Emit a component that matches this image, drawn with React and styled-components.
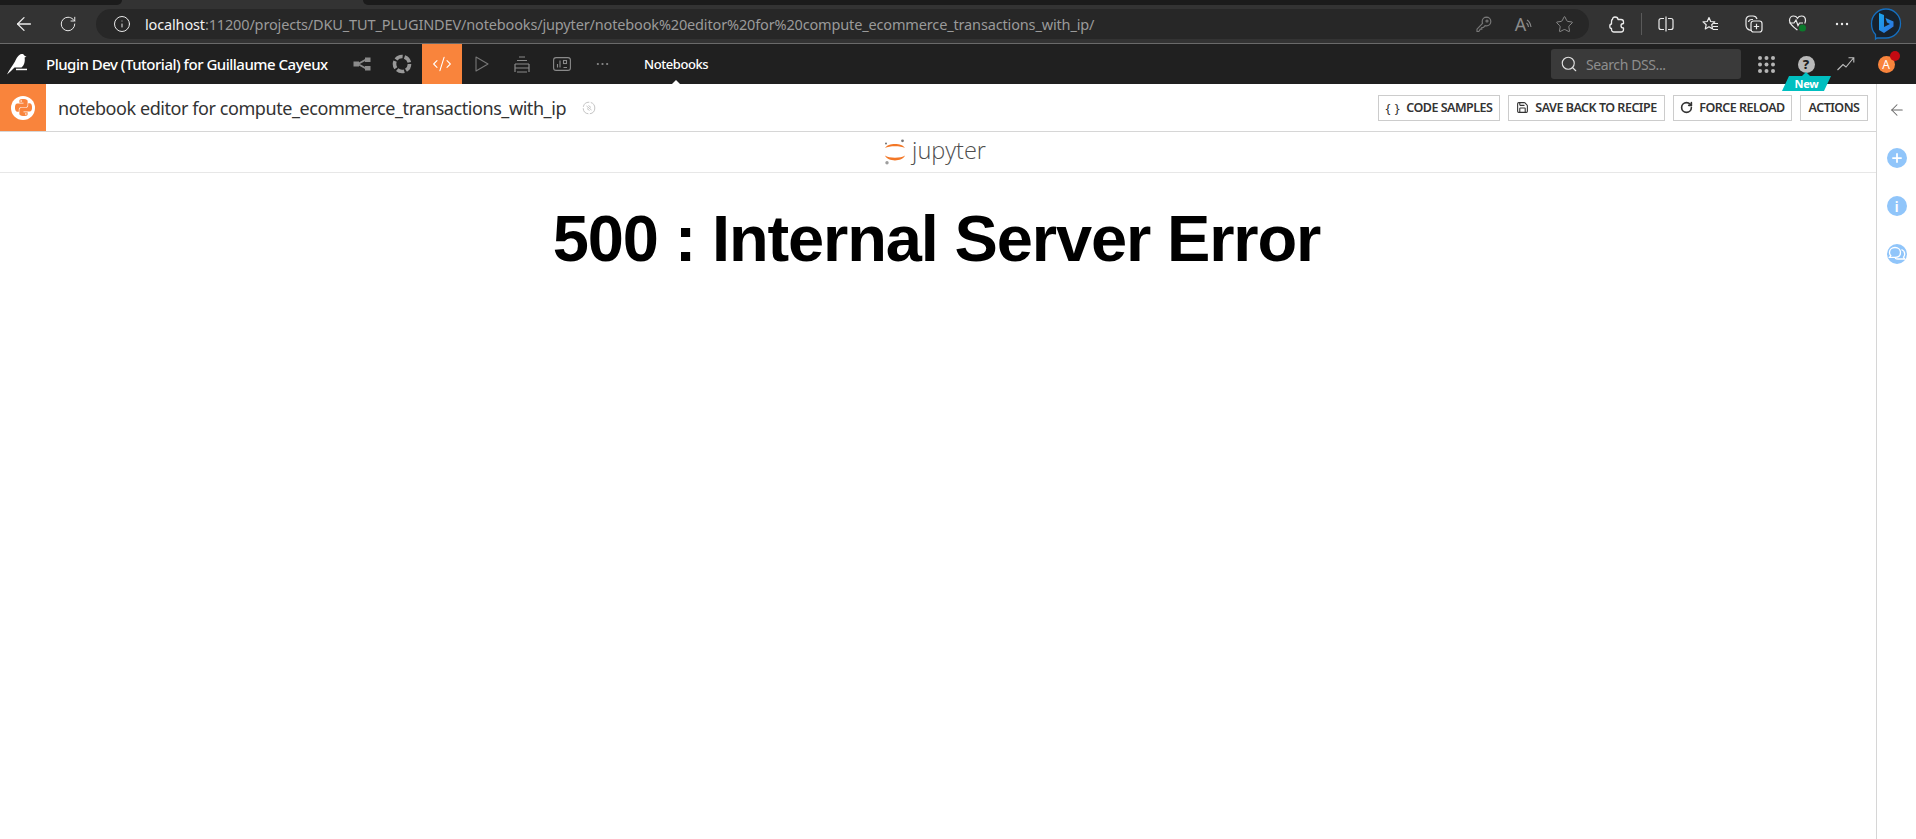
import styled, { createGlobalStyle } from "styled-components";
import { ArrowLeft, RotateCw, Info, Star, CodeXml, Search, Plus, Save } from "lucide-react";
import { SiPython } from "react-icons/si";

const GlobalStyle = createGlobalStyle`
  html, body {
    margin: 0;
    padding: 0;
    background: #fff;
    overflow: hidden;
  }
  * {
    box-sizing: border-box;
  }
`;

const UI_FONT = `"Noto Sans", "Open Sans", sans-serif`;

const Page = styled.div`
  display: flex;
  flex-direction: column;
  height: 839px;
  width: 1916px;
  overflow: hidden;
  font-family: ${UI_FONT};
`;

const TabStrip = styled.div`
  display: flex;
  height: 5px;
  background: #333;
`;

const InactiveTab = styled.div`
  height: 5px;
  flex: ${(p) => (p.$grow ? "1" : "none")};
  width: ${(p) => (p.$grow ? "auto" : "122px")};
  background: #1b1b1b;
  border-radius: ${(p) => (p.$grow ? "0 0 0 6px" : "0 0 6px 0")};
`;

const ActiveTab = styled.div`
  width: 241px;
`;

const BrowserBar = styled.div`
  display: flex;
  align-items: center;
  height: 39px;
  padding-left: 2px;
  background: #333;
  border-bottom: 1px solid #6a6a6a;
`;

const BrowserSlot = styled.div`
  position: relative;
  display: flex;
  align-items: center;
  justify-content: center;
  flex: none;
  width: ${(p) => p.$w || 44}px;
  height: 30px;
  color: ${(p) => p.$color || "#ececec"};
`;

const UrlPill = styled.div`
  display: flex;
  align-items: center;
  width: 1493px;
  height: 30px;
  margin: 0 6px;
  padding: 0 5px 0 12px;
  border-radius: 15px;
  background: #272727;
`;

const UrlText = styled.div`
  flex: 1;
  margin-left: 9px;
  font-size: 14.5px;
  letter-spacing: -0.15px;
  color: #9a9a9a;
  white-space: nowrap;
`;

const UrlHost = styled.span`
  color: #f2f2f2;
`;

const BarDivider = styled.div`
  flex: none;
  width: 1px;
  height: 22px;
  margin: 0 2px;
  background: #5a5a5a;
`;

const ReadLetter = styled.span`
  font-size: 18px;
  line-height: 1;
  color: #8b8b8b;
`;

const NavBar = styled.div`
  display: flex;
  align-items: center;
  height: 40px;
  padding-right: 10px;
  background: #202020;
`;

const BirdSlot = styled.div`
  display: flex;
  align-items: center;
  justify-content: center;
  flex: none;
  width: 33px;
  margin-right: 13px;
`;

const ProjectTitle = styled.div`
  flex: none;
  width: 282px;
  margin-right: 14px;
  font-size: 15px;
  font-weight: 500;
  letter-spacing: -0.5px;
  color: #fff;
  white-space: nowrap;
`;

const NavIcon = styled.div`
  display: flex;
  align-items: center;
  justify-content: center;
  flex: none;
  width: 40px;
  height: 40px;
  color: ${(p) => (p.$active ? "#fff" : "#8a8a8a")};
  background: ${(p) => (p.$active ? "#f9843c" : "transparent")};
`;

const NavLink = styled.div`
  position: relative;
  margin-left: 22px;
  height: 40px;
  line-height: 40px;
  font-size: 13px;
  font-weight: 500;
  letter-spacing: -0.42px;
  color: #fff;

  &::after {
    content: "";
    position: absolute;
    left: 50%;
    bottom: 0;
    margin-left: -4px;
    border: 4px solid transparent;
    border-top: 0;
    border-bottom-color: #fff;
  }
`;

const NavRight = styled.div`
  display: flex;
  align-items: center;
  margin-left: auto;
`;

const SearchBox = styled.div`
  display: flex;
  align-items: center;
  width: 190px;
  height: 30px;
  margin-right: 5px;
  padding-left: 9px;
  gap: 8px;
  border-radius: 3px;
  background: #3a3a3a;
  color: #e0e0e0;
`;

const SearchHint = styled.span`
  font-size: 14px;
  letter-spacing: -0.4px;
  color: #8e8e8e;
`;

const TopSlot = styled.div`
  position: relative;
  display: flex;
  align-items: center;
  justify-content: center;
  flex: none;
  width: 40px;
  height: 40px;
  color: #c4c4c4;
`;

const HelpDot = styled.div`
  width: 17px;
  height: 17px;
  border-radius: 50%;
  background: #b9b9b9;
  color: #202020;
  font-size: 13px;
  font-weight: 800;
  line-height: 17px;
  text-align: center;
`;

const NewBadge = styled.div`
  position: absolute;
  z-index: 2;
  left: -4px;
  top: 32px;
  width: 49px;
  height: 15px;
  background: #00bfc0;
  clip-path: polygon(7px 0, 100% 0, calc(100% - 7px) 100%, 0 100%);
  color: #fff;
  font-size: 11px;
  font-weight: 700;
  letter-spacing: -0.2px;
  line-height: 15px;
  text-align: center;
`;

const BadgeTip = styled.div`
  position: absolute;
  z-index: 2;
  left: 16px;
  top: 28px;
  border: 4px solid transparent;
  border-top: 0;
  border-bottom-color: #00bfc0;
`;

const Avatar = styled.div`
  width: 17px;
  height: 17px;
  border-radius: 50%;
  background: #f9843c;
  color: #fff;
  font-size: 12px;
  line-height: 17px;
  text-align: center;
`;

const RedDot = styled.div`
  position: absolute;
  left: 24px;
  top: 7px;
  width: 10px;
  height: 10px;
  border-radius: 50%;
  background: #c40a12;
`;

const Body = styled.div`
  display: flex;
  flex: 1;
  min-height: 0;
`;

const Main = styled.div`
  flex: 1;
  min-width: 0;
`;

const EditorHeader = styled.div`
  display: flex;
  align-items: center;
  height: 48px;
  padding-right: 8px;
  border-bottom: 1px solid #d6d6d6;
`;

const LangBlock = styled.div`
  display: flex;
  align-items: center;
  justify-content: center;
  flex: none;
  width: 46px;
  height: 47px;
  background: #f9843c;
`;

const LangCircle = styled.div`
  display: flex;
  align-items: center;
  justify-content: center;
  width: 24px;
  height: 24px;
  border-radius: 50%;
  background: #fff;
  color: #f9843c;
`;

const NotebookTitle = styled.div`
  margin-left: 12px;
  font-size: 18px;
  letter-spacing: -0.43px;
  color: #333;
  white-space: nowrap;
`;

const SyncMark = styled.div`
  display: flex;
  margin-left: 16px;
  color: #c4c4c4;
`;

const ButtonRow = styled.div`
  display: flex;
  gap: 8px;
  margin-left: auto;
`;

const ActionButton = styled.div`
  display: flex;
  align-items: center;
  justify-content: center;
  gap: 6px;
  width: ${(p) => p.$w}px;
  height: 26px;
  border: 1px solid #ccc;
  background: #fff;
  color: #333;
  font-size: 12.5px;
  font-weight: 600;
  letter-spacing: -0.5px;
  white-space: nowrap;
`;

const Braces = styled.span`
  font-size: 13px;
  font-weight: 400;
  letter-spacing: 0.5px;
`;

const JupyterBar = styled.div`
  display: flex;
  align-items: center;
  justify-content: center;
  gap: 6px;
  height: 41px;
  padding-right: 6px;
  border-bottom: 1px solid #e7e7e7;
`;

const JupyterName = styled.span`
  font-family: "Open Sans", sans-serif;
  font-size: 23.5px;
  font-weight: 300;
  line-height: 1;
  color: #4e4e4e;
  margin-top: -3px;
`;

const ErrorTitle = styled.h1`
  margin: 31px 0 0;
  padding-right: 3px;
  font-family: "Liberation Sans", Arial, sans-serif;
  font-size: 65px;
  font-weight: 700;
  letter-spacing: -1.15px;
  line-height: 70px;
  text-align: center;
  color: #000;
`;

const SideRail = styled.div`
  display: flex;
  flex-direction: column;
  align-items: center;
  flex: none;
  width: 40px;
  padding-top: 16px;
  border-left: 1px solid #d6d6d6;
`;

const RailBack = styled.div`
  display: flex;
  align-items: center;
  height: 20px;
  margin-bottom: 28px;
  color: #666;
`;

const RailCircle = styled.div`
  display: flex;
  align-items: center;
  justify-content: center;
  width: 20px;
  height: 20px;
  margin-bottom: 28px;
  border-radius: 50%;
  background: #90c5fa;
  color: #fff;
  font-size: 15px;
  font-weight: 600;
`;

function BirdLogo() {
  return (
    <svg width="22" height="22" viewBox="0 0 22 22" fill="#fff">
      <path d="M1 21.500 C3 17.500 6.500 12.500 9 8.500 C10.500 5 12.500 1.500 15.500 1 C17 .8 18 1.500 18.500 2.700 L20.500 3.800 L18.600 4.500 C19.200 8 18.500 12 15.500 14.500 L8.500 14.500 C6 17 3.500 19.500 1 21.500 Z" />
      <rect x="10" y="15.700" width="11" height="1.500" />
    </svg>
  );
}

function FlowIcon() {
  return (
    <svg width="18" height="14" viewBox="0 0 18 14" fill="currentColor">
      <path d="M5 7 L13 2.500 M5 7 L13 11.500" stroke="currentColor" strokeWidth="2" fill="none" />
      <rect x="0.500" y="4.500" width="5.500" height="5" />
      <rect x="12" y="0.500" width="5.500" height="4.500" />
      <rect x="12" y="9" width="5.500" height="4.500" />
    </svg>
  );
}

function RingIcon() {
  return (
    <svg width="20" height="20" viewBox="0 0 20 20">
      <circle
        cx="10"
        cy="10"
        r="7.500"
        fill="none"
        stroke="#999"
        strokeWidth="3.600"
        strokeDasharray="7.500 1.920"
      />
    </svg>
  );
}

function PlayIcon() {
  return (
    <svg width="14" height="16" viewBox="0 0 14 16" fill="none" stroke="#777" strokeWidth="1.100">
      <path d="M1 1 L13 8 L1 15 Z" strokeLinejoin="round" />
    </svg>
  );
}

function JobsIcon() {
  return (
    <svg width="16" height="17" viewBox="0 0 16 17" fill="none" stroke="currentColor" strokeWidth="1.200">
      <path d="M5 1 H11 M3 4.500 H13 M1 8 H15 M1 8 V16 M15 8 V16 M1 12 H15 M3 16 H13" />
    </svg>
  );
}

function DashIcon() {
  return (
    <svg width="18" height="14" viewBox="0 0 18 14" fill="none" stroke="currentColor" strokeWidth="1.100">
      <rect x="0.600" y="0.600" width="16.800" height="12.800" rx="2.500" />
      <path d="M4.500 10.500 V7 M7 10.500 V3.500 M10.500 10.500 H14" />
      <rect x="10.500" y="3.500" width="3" height="3" />
    </svg>
  );
}

function DotsIcon({ size = 14, color = "currentColor" }) {
  return (
    <svg width={size} height="4" viewBox="0 0 14 4" fill={color}>
      <circle cx="2" cy="2" r="1.200" />
      <circle cx="7" cy="2" r="1.200" />
      <circle cx="12" cy="2" r="1.200" />
    </svg>
  );
}

function KeyIcon() {
  return (
    <svg width="16" height="17" viewBox="0 0 16 17" fill="none" stroke="#777" strokeWidth="1.200">
      <path d="M10.500 1.200 a4.300 4.300 0 0 1 0 8.600 c-.6 0 -1 -.1 -1.400 -.2 L7.500 11.500 H5.800 V13.200 H4.300 L2.800 15.500 H1 V13.200 L6.500 7.300 C6.300 6.800 6.200 6.200 6.200 5.500 A4.300 4.300 0 0 1 10.500 1.200 Z" />
      <circle cx="11" cy="5" r="1" />
    </svg>
  );
}

function ReadWaves() {
  return (
    <svg width="7" height="10" viewBox="0 0 7 10" fill="none" stroke="#8b8b8b" strokeWidth="1.100">
      <path d="M1 1 C3.500 2.500 4.500 4.500 5 8 M0.500 4 C1.800 5 2.300 6 2.500 8" />
    </svg>
  );
}

// edge's extensions icon, a rounder blob than the lucide puzzle
function PuzzleBlob() {
  return (
    <svg width="16" height="17" viewBox="0 0 16 17" fill="none" stroke="#ececec" strokeWidth="1.300" strokeLinejoin="round">
      <path d="M6 1 C8 1 9 2.200 9 3.500 H12 C13.500 3.500 14.500 4.500 14.500 6 V7.500 C13 7.500 12 8.500 12 9.700 C12 11 13 12 14.500 12 V13.500 C14.500 15 13.500 16 12 16 H5 C3.500 16 2.500 15 2.500 13.500 V12.500 C1.500 12.500 .8 11.500 .8 10.200 C.8 9 1.500 8 2.500 8 V6 C2.500 4.500 2.500 3.500 3.500 3.500 C3.500 2.200 4.300 1 6 1 Z" />
    </svg>
  );
}

function SplitIcon() {
  return (
    <svg width="16" height="16" viewBox="0 0 16 16" fill="none" stroke="#ececec" strokeWidth="1.200">
      <path d="M6 2.500 H3 a2 2 0 0 0 -2 2 V11.500 a2 2 0 0 0 2 2 H6 M10 2.500 H13 a2 2 0 0 1 2 2 V11.500 a2 2 0 0 1 -2 2 H10 M8 0.500 V15.500" />
    </svg>
  );
}

function FavoritesIcon() {
  return (
    <svg width="17" height="17" viewBox="0 0 17 17" fill="none" stroke="#ececec" strokeWidth="1.200">
      <path d="M7 1.500 L8.700 5.500 L12.800 5.900 L9.700 8.700 L10.600 12.900 L7 10.700 L3.300 12.900 L4.200 8.700 L1 5.900 L5.200 5.500 Z" strokeLinejoin="round" />
      <path d="M11.500 7.500 H16 M10.700 10.500 H16 M11 13.500 H16" />
    </svg>
  );
}

function CollectionsIcon() {
  return (
    <svg width="18" height="18" viewBox="0 0 18 18" fill="none" stroke="#ececec" strokeWidth="1.200">
      <path d="M6.500 15.500 C3 15 1 13.500 1 10 V5 C1 2.500 3 1 5 1 H8 C10 1 11.500 2 12 4" />
      <path d="M3.500 7 C3.800 5.500 4.800 4.500 6.500 4.500 H8" />
      <rect x="6" y="6" width="11" height="11" rx="2.500" />
      <path d="M11.500 8.800 V14.200 M8.800 11.500 H14.200" />
    </svg>
  );
}

function HeartPulseIcon() {
  return (
    <svg width="20" height="20" viewBox="0 0 20 20" fill="none">
      <path
        d="M9.500 16 C6 13.500 1.500 10.500 1.500 6.500 C1.500 3.500 3.500 2 5.500 2 C7.500 2 8.800 3 9.500 4.200 C10.200 3 11.500 2 13.500 2 C15.800 2 17.500 3.700 17.500 6.500 C17.500 7.500 17.200 8.500 16.700 9.500"
        stroke="#ececec"
        strokeWidth="1.200"
      />
      <path d="M1.500 9 H6 L8 6 L10 11.500 L11.500 9 H15" stroke="#ececec" strokeWidth="1.200" />
      <circle cx="14.500" cy="14" r="3.500" fill="#0b7a2c" />
    </svg>
  );
}

function BingLogo() {
  return (
    <svg width="32" height="34" viewBox="0 0 32 34">
      <defs>
        <linearGradient id="bingB" x1="0" y1="0" x2="1" y2="1">
          <stop offset="0" stopColor="#1aa7ec" />
          <stop offset="1" stopColor="#2e6fe0" />
        </linearGradient>
      </defs>
      <path
        d="M16 2 C24 2 30.500 8.500 30.500 16.500 C30.500 24.500 24 31 16 31 L7.500 31 C7 31 6 31.500 5.500 32 L5.500 27.500 C2.800 24.800 1.500 21 1.500 16.500 C1.500 8.500 8 2 16 2 Z"
        fill="#17222e"
        stroke="#156fc0"
        strokeWidth="1.300"
      />
      <path
        d="M9 6 L14 8 V20 L20 17 L17 15.500 L15.500 11 L23.500 14.500 V19.500 L14 26 L9 23 Z"
        fill="url(#bingB)"
      />
    </svg>
  );
}

function GridDots() {
  const dots = [];
  for (let row = 0; row < 3; row++) {
    for (let col = 0; col < 3; col++) {
      dots.push(<circle key={`${row}-${col}`} cx={2 + col * 6.5} cy={2 + row * 6.5} r="2" />);
    }
  }
  return (
    <svg width="17" height="17" viewBox="0 0 17 17" fill="#b5b5b5">
      {dots}
    </svg>
  );
}

function TrendIcon() {
  return (
    <svg width="18" height="14" viewBox="0 0 18 14" fill="none" stroke="#bdbdbd" strokeWidth="1.100">
      <path d="M0.500 13 L6 7.500 L9 10 L16.500 1 M11.500 0.800 H16.800 V5.500" />
    </svg>
  );
}

function SyncIcon() {
  return (
    <svg width="14" height="14" viewBox="0 0 14 14" fill="none" stroke="currentColor" strokeWidth="1">
      <circle cx="7" cy="7" r="5.800" strokeDasharray="8 1.500" />
      <path d="M4.500 5 L9.500 9 M5 7.500 L7.500 9.500 M6.500 4.500 L9 6.500" />
    </svg>
  );
}

function JupyterLogo() {
  return (
    <svg width="22" height="26" viewBox="0 0 22 26">
      <path d="M1 9 C4 3.500 18 3.500 21 9 C17 6.500 5 6.500 1 9 Z" fill="#f37726" />
      <path d="M1 16.500 C5 19.500 17 19.500 21 16.500 C18 23 4 23 1 16.500 Z" fill="#f37726" />
      <circle cx="18.500" cy="1.800" r="1.400" fill="#767677" />
      <circle cx="2" cy="4.500" r="0.900" fill="#616262" />
      <circle cx="3" cy="23.800" r="1.700" fill="#9e9e9e" />
    </svg>
  );
}

function ChatIcon() {
  return (
    <svg width="18" height="16" viewBox="0 0 18 16" fill="none" stroke="#fff" strokeWidth="1.300">
      <path d="M7 1.500 C10.300 1.500 12.500 3.600 12.500 6.400 C12.500 9.300 10.300 11.300 7 11.300 H1.500 L2.800 9.600 C1.900 8.700 1.500 7.600 1.500 6.400 C1.500 3.600 3.700 1.500 7 1.500 Z" />
      <path d="M13.500 3.500 C15.500 4.400 16.700 6 16.700 8 C16.700 9.200 16.300 10.300 15.500 11.100 L16.700 13 H10 C8.800 13 7.800 12.700 7 12.200" />
    </svg>
  );
}

const MAIN_BUTTONS = [
  { label: "CODE SAMPLES", width: 122, icon: <Braces>{"{ }"}</Braces> },
  { label: "SAVE BACK TO RECIPE", width: 157, icon: <Save size={13} strokeWidth={2} /> },
  { label: "FORCE RELOAD", width: 119, icon: <RotateCw size={13} strokeWidth={3} /> },
  { label: "ACTIONS", width: 68 },
];

function App() {
  return (
    <Page>
      <GlobalStyle />
      <TabStrip>
        <InactiveTab />
        <ActiveTab />
        <InactiveTab $grow />
      </TabStrip>
      <BrowserBar>
        <BrowserSlot>
          <ArrowLeft size={22} strokeWidth={1.4} />
        </BrowserSlot>
        <BrowserSlot>
          <RotateCw size={18} strokeWidth={1.3} />
        </BrowserSlot>
        <UrlPill>
          <BrowserSlot $w={28}>
            <Info size={18} strokeWidth={1.3} />
          </BrowserSlot>
          <UrlText>
            <UrlHost>localhost</UrlHost>
            :11200/projects/DKU_TUT_PLUGINDEV/notebooks/jupyter/notebook%20editor%20for%20compute_ecommerce_transactions_with_ip/
          </UrlText>
          <BrowserSlot $w={40}>
            <KeyIcon />
          </BrowserSlot>
          <BrowserSlot $w={40}>
            <ReadLetter>A</ReadLetter>
            <ReadWaves />
          </BrowserSlot>
          <BrowserSlot $w={40} $color="#8b8b8b">
            <Star size={19} strokeWidth={1.2} />
          </BrowserSlot>
        </UrlPill>
        <BrowserSlot>
          <PuzzleBlob />
        </BrowserSlot>
        <BarDivider />
        <BrowserSlot>
          <SplitIcon />
        </BrowserSlot>
        <BrowserSlot>
          <FavoritesIcon />
        </BrowserSlot>
        <BrowserSlot>
          <CollectionsIcon />
        </BrowserSlot>
        <BrowserSlot>
          <HeartPulseIcon />
        </BrowserSlot>
        <BrowserSlot>
          <DotsIcon />
        </BrowserSlot>
        <BrowserSlot>
          <BingLogo />
        </BrowserSlot>
      </BrowserBar>
      <NavBar>
        <BirdSlot>
          <BirdLogo />
        </BirdSlot>
        <ProjectTitle>Plugin Dev (Tutorial) for Guillaume Cayeux</ProjectTitle>
        <NavIcon>
          <FlowIcon />
        </NavIcon>
        <NavIcon>
          <RingIcon />
        </NavIcon>
        <NavIcon $active>
          <CodeXml size={20} strokeWidth={1.3} />
        </NavIcon>
        <NavIcon>
          <PlayIcon />
        </NavIcon>
        <NavIcon>
          <JobsIcon />
        </NavIcon>
        <NavIcon>
          <DashIcon />
        </NavIcon>
        <NavIcon>
          <DotsIcon size={13} />
        </NavIcon>
        <NavLink>Notebooks</NavLink>
        <NavRight>
          <SearchBox>
            <Search size={18} strokeWidth={1.5} />
            <SearchHint>Search DSS...</SearchHint>
          </SearchBox>
          <TopSlot>
            <GridDots />
          </TopSlot>
          <TopSlot>
            <HelpDot>?</HelpDot>
            <BadgeTip />
            <NewBadge>New</NewBadge>
          </TopSlot>
          <TopSlot>
            <TrendIcon />
          </TopSlot>
          <TopSlot>
            <Avatar>A</Avatar>
            <RedDot />
          </TopSlot>
        </NavRight>
      </NavBar>
      <Body>
        <Main>
          <EditorHeader>
            <LangBlock>
              <LangCircle>
                <SiPython size={17} />
              </LangCircle>
            </LangBlock>
            <NotebookTitle>notebook editor for compute_ecommerce_transactions_with_ip</NotebookTitle>
            <SyncMark>
              <SyncIcon />
            </SyncMark>
            <ButtonRow>
              {MAIN_BUTTONS.map((btn) => (
                <ActionButton key={btn.label} $w={btn.width}>
                  {btn.icon}
                  {btn.label}
                </ActionButton>
              ))}
            </ButtonRow>
          </EditorHeader>
          <JupyterBar>
            <JupyterLogo />
            <JupyterName>jupyter</JupyterName>
          </JupyterBar>
          <ErrorTitle>500 : Internal Server Error</ErrorTitle>
        </Main>
        <SideRail>
          <RailBack>
            <ArrowLeft size={18} strokeWidth={1.4} />
          </RailBack>
          <RailCircle>
            <Plus size={14} strokeWidth={3} />
          </RailCircle>
          <RailCircle>i</RailCircle>
          <RailCircle>
            <ChatIcon />
          </RailCircle>
        </SideRail>
      </Body>
    </Page>
  );
}

export default App;
